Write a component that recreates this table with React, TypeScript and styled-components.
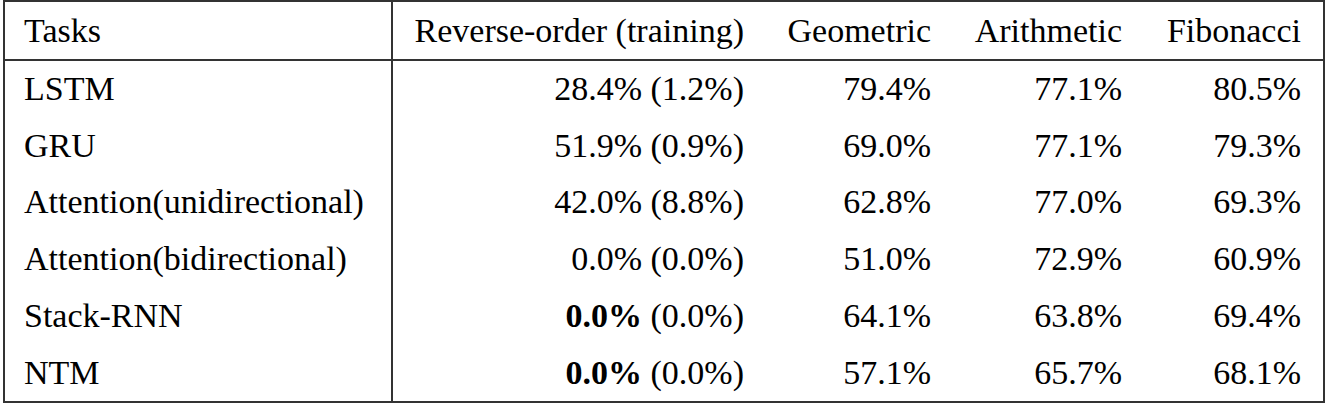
import * as React from "react";
import styled, { createGlobalStyle } from "styled-components";

const GlobalStyle = createGlobalStyle`
  html, body {
    margin: 0;
    padding: 0;
    background: #ffffff;
  }
  body {
    font-family: "Liberation Serif", "Times New Roman", serif;
    color: #000000;
  }
`;

const SPage = styled.div`
  padding: 0 0 0 3px;
`;

// tables don't inherit body fonts in quirks mode, so the table sets its own
const STable = styled.table`
  width: 1322px;
  table-layout: fixed;
  border-collapse: separate;
  border-spacing: 0;
  border: 2px solid #333333;
  font-family: "Liberation Serif", "Times New Roman", serif;
  font-size: 34px;
  color: #000000;
`;

const SHeadCell = styled.th<{ $first?: boolean }>`
  font-weight: normal;
  line-height: 57px;
  height: 57px;
  padding: 0 ${(p) => (p.$first ? "0 0 19px" : "22px 0 0")};
  text-align: ${(p) => (p.$first ? "left" : "right")};
  white-space: nowrap;
  border-bottom: 2px solid #333333;
  border-right: ${(p) => (p.$first ? "2px solid #333333" : "none")};
`;

const SCell = styled.td<{ $first?: boolean }>`
  line-height: 56.7px;
  height: 56.7px;
  padding: 0 ${(p) => (p.$first ? "0 0 19px" : "22px 0 0")};
  text-align: ${(p) => (p.$first ? "left" : "right")};
  white-space: nowrap;
  border-right: ${(p) => (p.$first ? "2px solid #333333" : "none")};
`;

const SBest = styled.b`
  font-weight: bold;
`;

interface Row {
  task: string;
  reverse: string;
  reverseStd: string;
  best?: boolean;
  geometric: string;
  arithmetic: string;
  fibonacci: string;
}

const rows: Row[] = [
  { task: "LSTM", reverse: "28.4%", reverseStd: "(1.2%)", geometric: "79.4%", arithmetic: "77.1%", fibonacci: "80.5%" },
  { task: "GRU", reverse: "51.9%", reverseStd: "(0.9%)", geometric: "69.0%", arithmetic: "77.1%", fibonacci: "79.3%" },
  { task: "Attention(unidirectional)", reverse: "42.0%", reverseStd: "(8.8%)", geometric: "62.8%", arithmetic: "77.0%", fibonacci: "69.3%" },
  { task: "Attention(bidirectional)", reverse: "0.0%", reverseStd: "(0.0%)", geometric: "51.0%", arithmetic: "72.9%", fibonacci: "60.9%" },
  { task: "Stack-RNN", reverse: "0.0%", reverseStd: "(0.0%)", best: true, geometric: "64.1%", arithmetic: "63.8%", fibonacci: "69.4%" },
  { task: "NTM", reverse: "0.0%", reverseStd: "(0.0%)", best: true, geometric: "57.1%", arithmetic: "65.7%", fibonacci: "68.1%" },
];

const App = () => {
  return (
    <SPage>
      <GlobalStyle />
      <STable>
        <colgroup>
          <col style={{ width: 388 }} />
          <col style={{ width: 373 }} />
          <col style={{ width: 187 }} />
          <col style={{ width: 191 }} />
          <col style={{ width: 179 }} />
        </colgroup>
        <thead>
          <tr>
            <SHeadCell $first>Tasks</SHeadCell>
            <SHeadCell>Reverse-order (training)</SHeadCell>
            <SHeadCell>Geometric</SHeadCell>
            <SHeadCell>Arithmetic</SHeadCell>
            <SHeadCell>Fibonacci</SHeadCell>
          </tr>
        </thead>
        <tbody>
          {rows.map((r) => (
            <tr key={r.task}>
              <SCell $first>{r.task}</SCell>
              <SCell>
                {r.best ? <SBest>{r.reverse}</SBest> : r.reverse} {r.reverseStd}
              </SCell>
              <SCell>{r.geometric}</SCell>
              <SCell>{r.arithmetic}</SCell>
              <SCell>{r.fibonacci}</SCell>
            </tr>
          ))}
        </tbody>
      </STable>
    </SPage>
  );
};

export default App;
